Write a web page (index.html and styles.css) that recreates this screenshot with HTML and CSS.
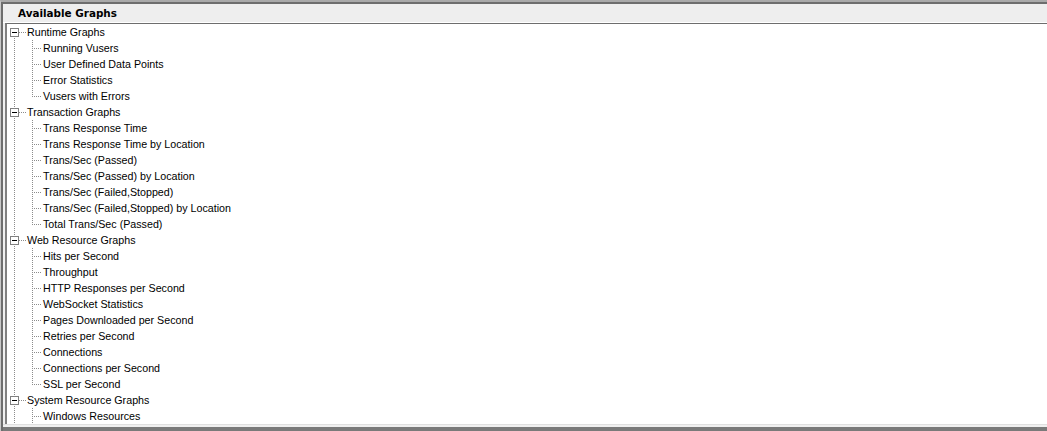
FILE: index.html
```html
<!DOCTYPE html>
<html>
<head>
<meta charset="utf-8">
<link rel="stylesheet" href="styles.css">
</head>
<body>
<div class="window">
  <div class="frame">
    <div class="header"><span class="title">Available Graphs</span></div>
    <div class="list">
      <div class="row"><span class="g-root first"><span class="box"></span></span><span class="label">Runtime Graphs</span></div>
      <div class="row"><span class="g-pass"></span><span class="g-branch"></span><span class="label">Running Vusers</span></div>
      <div class="row"><span class="g-pass"></span><span class="g-branch"></span><span class="label">User Defined Data Points</span></div>
      <div class="row"><span class="g-pass"></span><span class="g-branch"></span><span class="label">Error Statistics</span></div>
      <div class="row"><span class="g-pass"></span><span class="g-branch last"></span><span class="label">Vusers with Errors</span></div>

      <div class="row"><span class="g-root"><span class="box"></span></span><span class="label">Transaction Graphs</span></div>
      <div class="row"><span class="g-pass"></span><span class="g-branch"></span><span class="label">Trans Response Time</span></div>
      <div class="row"><span class="g-pass"></span><span class="g-branch"></span><span class="label">Trans Response Time by Location</span></div>
      <div class="row"><span class="g-pass"></span><span class="g-branch"></span><span class="label">Trans/Sec (Passed)</span></div>
      <div class="row"><span class="g-pass"></span><span class="g-branch"></span><span class="label">Trans/Sec (Passed) by Location</span></div>
      <div class="row"><span class="g-pass"></span><span class="g-branch"></span><span class="label">Trans/Sec (Failed,Stopped)</span></div>
      <div class="row"><span class="g-pass"></span><span class="g-branch"></span><span class="label">Trans/Sec (Failed,Stopped) by Location</span></div>
      <div class="row"><span class="g-pass"></span><span class="g-branch last"></span><span class="label">Total Trans/Sec (Passed)</span></div>

      <div class="row"><span class="g-root"><span class="box"></span></span><span class="label">Web Resource Graphs</span></div>
      <div class="row"><span class="g-pass"></span><span class="g-branch"></span><span class="label">Hits per Second</span></div>
      <div class="row"><span class="g-pass"></span><span class="g-branch"></span><span class="label">Throughput</span></div>
      <div class="row"><span class="g-pass"></span><span class="g-branch"></span><span class="label">HTTP Responses per Second</span></div>
      <div class="row"><span class="g-pass"></span><span class="g-branch"></span><span class="label">WebSocket Statistics</span></div>
      <div class="row"><span class="g-pass"></span><span class="g-branch"></span><span class="label">Pages Downloaded per Second</span></div>
      <div class="row"><span class="g-pass"></span><span class="g-branch"></span><span class="label">Retries per Second</span></div>
      <div class="row"><span class="g-pass"></span><span class="g-branch"></span><span class="label">Connections</span></div>
      <div class="row"><span class="g-pass"></span><span class="g-branch"></span><span class="label">Connections per Second</span></div>
      <div class="row"><span class="g-pass"></span><span class="g-branch last"></span><span class="label">SSL per Second</span></div>

      <div class="row"><span class="g-root"><span class="box"></span></span><span class="label">System Resource Graphs</span></div>
      <div class="row"><span class="g-pass"></span><span class="g-branch"></span><span class="label">Windows Resources</span></div>
    </div>
    <div class="footer"></div>
  </div>
</div>
</body>
</html>
```
FILE: styles.css
```css
html, body {
  margin: 0;
  padding: 0;
  background: #f0f0f0;
}

.window {
  width: 1047px;
  height: 431px;
  overflow: hidden;
  background: #f0f0f0;
  border-top: 2px solid #a9a9a9;
  border-left: 1px solid #c8c8c8;
  box-sizing: border-box;
}

.frame {
  height: 429px;
  display: flex;
  flex-direction: column;
  border-top: 2px solid #6d6d6d;
  border-left: 2px solid #6d6d6d;
  box-sizing: border-box;
}

.header {
  height: 18px;
  flex: none;
  background: #eeeeee;
  border-bottom: 1px solid #ffffff;
  display: flex;
  align-items: center;
  padding-left: 15px;
}

.title {
  font-family: "DejaVu Sans", sans-serif;
  font-weight: bold;
  font-size: 10.4px;
  color: #000;
}

.list {
  height: 401px;
  flex: none;
  margin-left: 2px;
  background: #ffffff;
  border-top: 1px solid #6d6d6d;
  border-left: 2px solid #808080;
  box-sizing: border-box;
  overflow: hidden;
  font-family: "Liberation Sans", Arial, sans-serif;
  font-size: 10.7px;
  color: #000;
}

.row {
  display: flex;
  height: 16px;
  align-items: stretch;
}

.label {
  line-height: 16px;
  white-space: nowrap;
}

.g-root,
.g-pass,
.g-branch {
  flex: none;
  display: flex;
  align-items: center;
}

.g-root {
  width: 20px;
  background:
    repeating-linear-gradient(to bottom, #8c8c8c 0 1px, transparent 1px 2px) 7px 0 / 1px 16px no-repeat,
    repeating-linear-gradient(to right, #8c8c8c 0 1px, transparent 1px 2px) 12px 8px / 7px 1px no-repeat;
}

.g-root.first {
  background:
    repeating-linear-gradient(to bottom, #8c8c8c 0 1px, transparent 1px 2px) 7px 8px / 1px 8px no-repeat,
    repeating-linear-gradient(to right, #8c8c8c 0 1px, transparent 1px 2px) 12px 8px / 7px 1px no-repeat;
}

.g-pass {
  width: 20px;
  background:
    repeating-linear-gradient(to bottom, #8c8c8c 0 1px, transparent 1px 2px) 7px 0 / 1px 16px no-repeat;
}

.g-branch {
  width: 16px;
  background:
    repeating-linear-gradient(to bottom, #8c8c8c 0 1px, transparent 1px 2px) 5px 0 / 1px 16px no-repeat,
    repeating-linear-gradient(to right, #8c8c8c 0 1px, transparent 1px 2px) 7px 8px / 8px 1px no-repeat;
}

.g-branch.last {
  background:
    repeating-linear-gradient(to bottom, #8c8c8c 0 1px, transparent 1px 2px) 5px 0 / 1px 9px no-repeat,
    repeating-linear-gradient(to right, #8c8c8c 0 1px, transparent 1px 2px) 7px 8px / 8px 1px no-repeat;
}

.box {
  width: 9px;
  height: 9px;
  margin-left: 3px;
  box-sizing: border-box;
  border: 1px solid #808080;
  background: #ffffff;
  display: flex;
  align-items: center;
  justify-content: center;
}

.box::before {
  content: "";
  width: 5px;
  height: 1px;
  background: #000000;
}

.footer {
  flex: 1;
  background: #7a7a7a;
  border-top: 1px solid #e0e0e0;
  box-shadow: inset 0 1px 0 #f0f0f0, inset 0 2px 0 #f0f0f0;
}
```
